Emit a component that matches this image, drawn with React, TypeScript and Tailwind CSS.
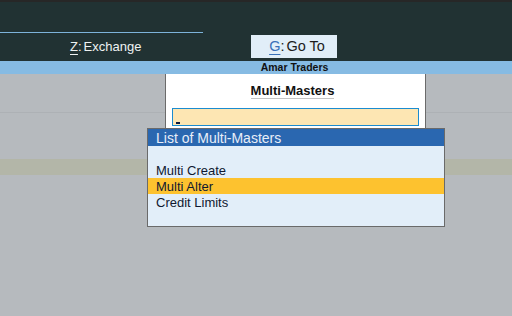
const FONT = "font-['Liberation_Sans',Arial,sans-serif]";

const ITEMS = [
  { label: "", active: false },
  { label: "Multi Create", active: false },
  { label: "Multi Alter", active: true },
  { label: "Credit Limits", active: false },
];

// grey work area with its faint rule and beige band
function Backdrop({ offset }: { offset: number }) {
  return (
    <div className="flex flex-col">
      {offset === 0 && (
        <>
          <div className="h-[38px]" />
          <div className="h-px bg-[#adb1b5]" />
          <div className="h-[46px]" />
        </>
      )}
      {offset > 0 && <div style={{ height: offset }} />}
      <div className="h-[16px] bg-[#b3b6a8]" />
    </div>
  );
}

export default function App() {
  return (
    <div className={`relative h-[316px] w-[512px] overflow-hidden bg-[#b6babe] ${FONT}`}>
      <div className="h-[2px] bg-[#272727]" />

      {/* top bar */}
      <div className="h-[59px] bg-[#213233]">
        <div className="h-[30px]" />
        <div className="h-px w-[203px] bg-[#7db3da]" />
        <div className="mt-[2px] flex h-[23px] items-center">
          <div className="w-[251px] pl-[70px] text-[13px] leading-none text-[#eef2f2]">
            <span className="underline decoration-1 underline-offset-[3px]">Z</span>
            <span>:</span>
            <span className="ml-[2px]">Exchange</span>
          </div>
          <div className="flex h-[23px] w-[86px] items-center justify-center bg-[#e1eef8] pl-[6px] text-[14.5px] leading-none text-[#1c1c1c]">
            <span className="text-[#3870b8] underline decoration-1 underline-offset-[3px]">G</span>
            <span>:</span>
            <span className="ml-[2px]">Go To</span>
          </div>
        </div>
      </div>

      {/* company band */}
      <div className="flex h-[13px] items-center bg-[#86bbe3]">
        <div className="ml-[165px] w-[259px] text-center text-[10.5px] font-bold leading-none text-[#111]">
          Amar Traders
        </div>
      </div>

      {/* work area */}
      <div className="flex">
        <div className="w-[165px]">
          <Backdrop offset={0} />
        </div>
        <div className="w-[261px]">
          <div className="h-[55px] border-x border-[#6b6b6b] bg-white px-[6px]">
            <div className="flex justify-center pr-[6px] pt-[9px]">
              <div className="border-b border-[#c4c4c4] text-[13px] font-bold leading-[15px] text-[#111]">
                Multi-Masters
              </div>
            </div>
            <div className="mt-[9px] flex h-[18px] items-end border border-[#1b8cd0] bg-[#fde6b3] pb-[1px] pl-[3px]">
              <div className="h-[2px] w-[4px] bg-[#0d1a40]" />
            </div>
          </div>
          <Backdrop offset={30} />
        </div>
        <div className="flex-1">
          <Backdrop offset={0} />
        </div>
      </div>

      {/* popup list */}
      <div className="absolute left-[147px] top-[128px] h-[99px] w-[298px] border border-[#6a6a6a] bg-[#e2eef9]">
        <div className="flex h-[17px] items-center bg-[#2a67b0] pl-[8px] text-[14px] leading-none text-[#e8eef8]">
          List of Multi-Masters
        </div>
        {ITEMS.map((item, i) => (
          <div
            key={i}
            className={`flex h-[16px] items-center pl-[8px] text-[13px] leading-none text-[#0f1830] ${
              item.active ? "bg-[#fdc22f]" : ""
            }`}
          >
            {item.label}
          </div>
        ))}
      </div>
    </div>
  );
}
